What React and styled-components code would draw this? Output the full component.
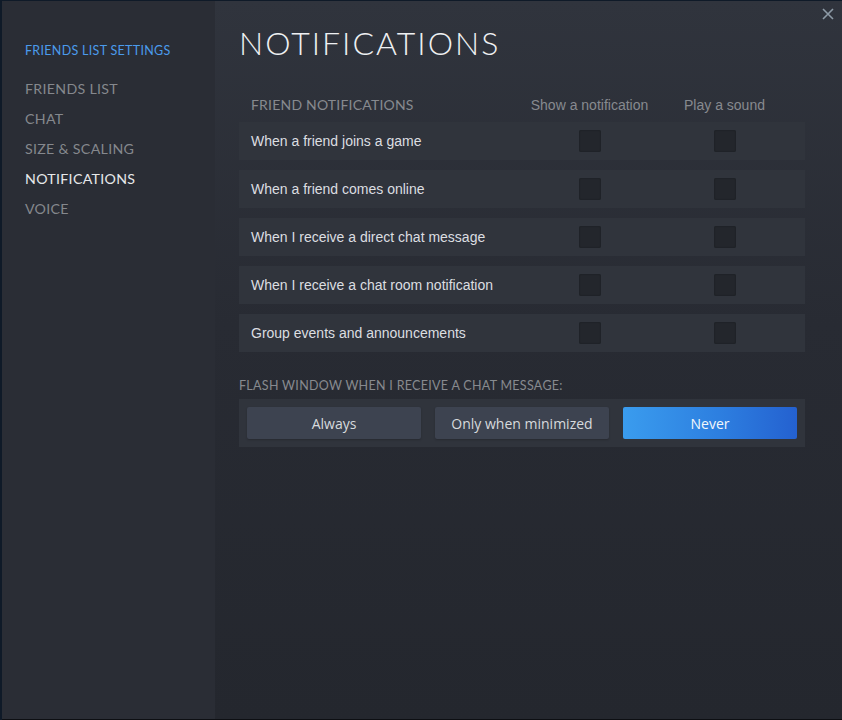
import React, { useState } from 'react';
import styled, { createGlobalStyle } from 'styled-components';

const GlobalStyle = createGlobalStyle`
  html, body {
    margin: 0;
    padding: 0;
    background: #0f1a28;
  }
`;

const Window = styled.div`
  position: relative;
  display: flex;
  width: 840px;
  height: 718px;
  margin: 1px 0 0 2px;
  background: #2a2d35;
  border-bottom: 1px solid #0d0f13;
`;

const Sidebar = styled.nav`
  width: 213px;
  flex-shrink: 0;
  display: flex;
  flex-direction: column;
  padding: 42px 0 0 23px;
  box-sizing: border-box;
  font-family: Lato, "Open Sans", sans-serif;
`;

const SidebarTitle = styled.div`
  color: #4b9bec;
  font-size: 12.5px;
  letter-spacing: 0.3px;
  margin-bottom: 16px;
`;

const NavItem = styled.div`
  color: ${({ active }) => (active ? '#e6e8ea' : '#85888d')};
  font-size: 14.2px;
  letter-spacing: 0.3px;
  line-height: 30px;
  cursor: pointer;
`;

const Main = styled.main`
  flex: 1;
  display: flex;
  flex-direction: column;
  padding: 22px 37px 0 24px;
  background: linear-gradient(180deg, #30343d 0%, #282b33 45%, #24272e 100%);
`;

const Title = styled.h1`
  margin: 0 0 33px;
  font-family: Lato, "Open Sans", sans-serif;
  font-weight: 300;
  font-size: 32px;
  letter-spacing: 2px;
  color: #eef0f2;
`;

const Table = styled.div`
  display: flex;
  flex-direction: column;
  gap: 10px;
  font-family: "Liberation Sans", Arial, sans-serif;
`;

const Grid = styled.div`
  display: grid;
  grid-template-columns: 1fr 135px 135px 13px;
  align-items: center;
  padding-left: 12px;
  height: ${({ head }) => (head ? '27px' : '38px')};
  background: ${({ head }) => (head ? 'transparent' : '#30343c')};
  margin-bottom: ${({ head }) => (head ? '-10px' : '0')};
`;

const HeadLabel = styled.div`
  color: #878a8f;
  font-family: Lato, "Open Sans", sans-serif;
  font-size: 14px;
  letter-spacing: 0.2px;
  padding-bottom: 8px;
`;

const ColLabel = styled.div`
  color: #878a8f;
  font-size: 14px;
  text-align: center;
  white-space: nowrap;
  padding-bottom: 8px;
`;

const RowLabel = styled.div`
  color: #dcdee1;
  font-size: 14px;
  white-space: nowrap;
`;

const Cell = styled.div`
  display: flex;
  justify-content: center;
`;

const Check = styled.button`
  width: 22px;
  height: 22px;
  padding: 0;
  border: none;
  border-radius: 2px;
  background: #23262c;
  box-shadow: inset 0 0 2px rgb(0 0 0 / 35%);
  cursor: pointer;
`;

const FlashLabel = styled.div`
  margin: 26px 0 6px;
  color: #878a8f;
  font-family: Lato, "Open Sans", sans-serif;
  font-size: 12.5px;
  letter-spacing: 0.3px;
`;

const ButtonGroup = styled.div`
  display: grid;
  grid-template-columns: repeat(3, 1fr);
  gap: 14px;
  padding: 8px;
  background: #30343c;
`;

const ChoiceButton = styled.button`
  height: 32px;
  border: none;
  border-radius: 2px;
  font-family: "Open Sans", Lato, sans-serif;
  font-size: 14px;
  color: ${({ selected }) => (selected ? '#f2f6fb' : '#d7dadd')};
  background: ${({ selected }) =>
    selected ? 'linear-gradient(90deg, #3a9cee 0%, #2d7fe0 55%, #2461d0 100%)' : '#3d4350'};
  box-shadow: ${({ selected }) => (selected ? 'none' : '0 1px 2px rgb(0 0 0 / 20%)')};
  cursor: pointer;
`;

const Close = styled.button`
  position: absolute;
  top: 5px;
  right: 6px;
  width: 16px;
  height: 16px;
  padding: 0;
  border: none;
  background: transparent;
  cursor: pointer;
`;

const navItems = ['FRIENDS LIST', 'CHAT', 'SIZE & SCALING', 'NOTIFICATIONS', 'VOICE'];

const rows = [
  'When a friend joins a game',
  'When a friend comes online',
  'When I receive a direct chat message',
  'When I receive a chat room notification',
  'Group events and announcements',
];

const flashOptions = ['Always', 'Only when minimized', 'Never'];

const App = () => {
  const [flash, setFlash] = useState('Never');

  return (
    <>
      <GlobalStyle />
      <Window>
        <Sidebar>
          <SidebarTitle>FRIENDS LIST SETTINGS</SidebarTitle>
          {navItems.map((item) => (
            <NavItem key={item} active={item === 'NOTIFICATIONS'}>
              {item}
            </NavItem>
          ))}
        </Sidebar>
        <Main>
          <Title>NOTIFICATIONS</Title>
          <Table>
            <Grid head>
              <HeadLabel>FRIEND NOTIFICATIONS</HeadLabel>
              <ColLabel>Show a notification</ColLabel>
              <ColLabel>Play a sound</ColLabel>
            </Grid>
            {rows.map((row) => (
              <Grid key={row}>
                <RowLabel>{row}</RowLabel>
                <Cell><Check /></Cell>
                <Cell><Check /></Cell>
              </Grid>
            ))}
          </Table>
          <FlashLabel>FLASH WINDOW WHEN I RECEIVE A CHAT MESSAGE:</FlashLabel>
          <ButtonGroup>
            {flashOptions.map((opt) => (
              <ChoiceButton key={opt} selected={flash === opt} onClick={() => setFlash(opt)}>
                {opt}
              </ChoiceButton>
            ))}
          </ButtonGroup>
        </Main>
        <Close aria-label="Close">
          <svg width="16" height="16" viewBox="0 0 16 16">
            <path d="M3 3 L13 13 M13 3 L3 13" stroke="#8d9aa6" strokeWidth="1.6" />
          </svg>
        </Close>
      </Window>
    </>
  );
};

export default App;
